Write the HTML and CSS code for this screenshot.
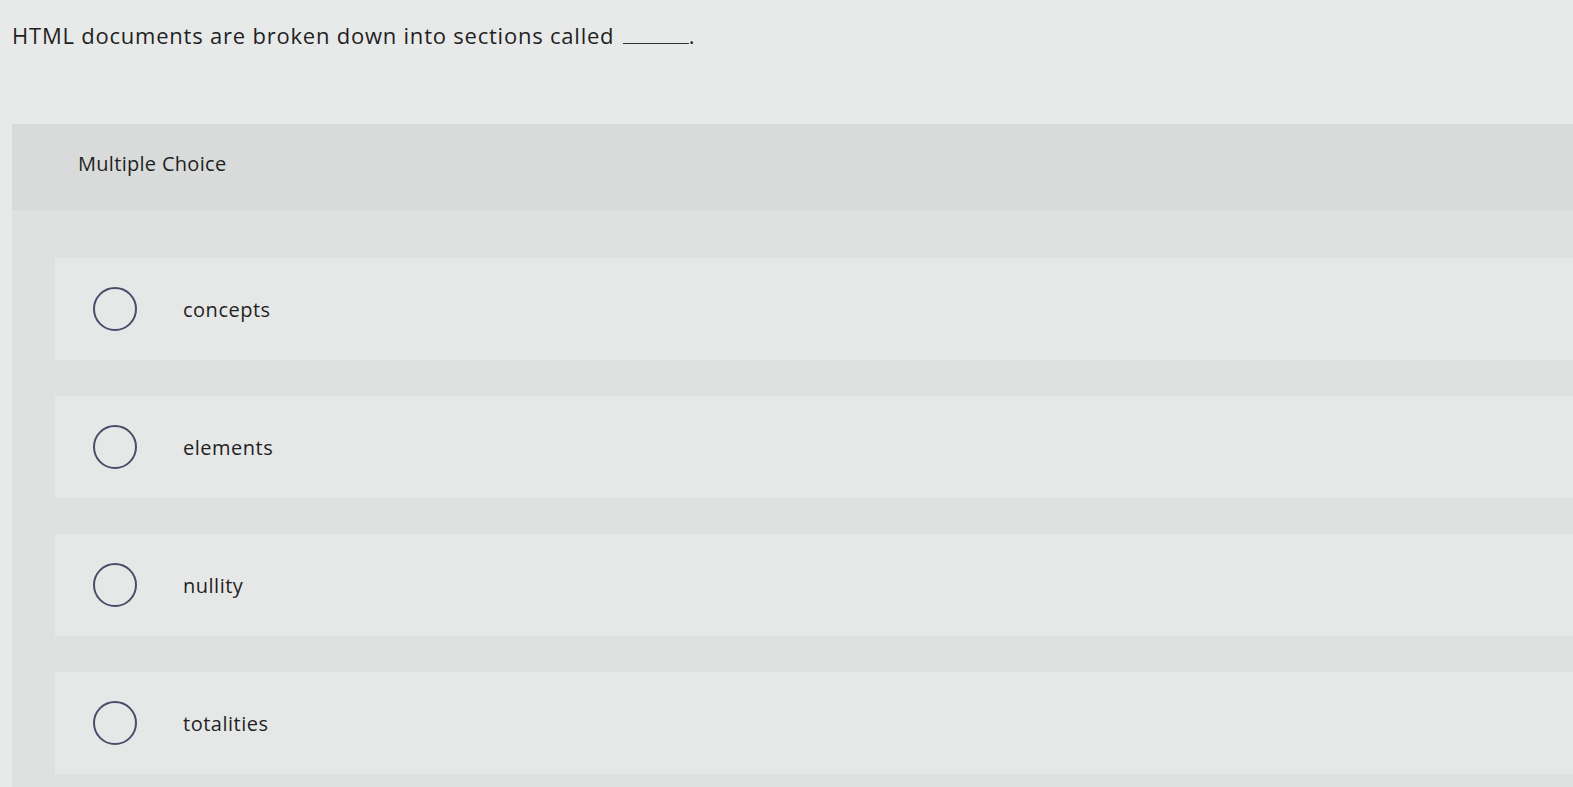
FILE: index.html
```html
<!DOCTYPE html>
<html>
<head>
  <title>Question</title>
  <link rel="stylesheet" href="styles.css">
</head>
<body>

<p class="prompt">HTML documents are broken down into sections called <span class="blank"></span>.</p>

<div class="panel">
  <div class="panel-head">Multiple Choice</div>
  <div class="choices">
    <label class="choice"><span class="radio"></span><span>concepts</span></label>
    <label class="choice"><span class="radio"></span><span>elements</span></label>
    <label class="choice"><span class="radio"></span><span>nullity</span></label>
    <label class="choice"><span class="radio"></span><span>totalities</span></label>
  </div>
</div>

</body>
</html>
```

FILE: styles.css
```css
body {
  margin: 0;
  font-family: "Open Sans", Lato, sans-serif;
  background-color: #e8eae9;
  color: #1f1f24;
}
.prompt {
  margin: 0;
  padding: 20px 12px 0;
  font-size: 22px;
  letter-spacing: 0.78px;
  height: 124px;
  box-sizing: border-box;
}
.blank {
  display: inline-block;
  width: 66px;
  border-bottom: 1px solid #333;
  margin-left: 2px;
}
.panel {
  margin-left: 12px;
  background-color: #dee1e0;
  padding-bottom: 20px;
}
.panel-head {
  background-color: #d8dbda;
  padding: 26px 66px 0;
  height: 86px;
  box-sizing: border-box;
  font-size: 20px;
  letter-spacing: 0.3px;
}
.choices {
  display: flex;
  flex-direction: column;
  gap: 36px;
  padding: 48px 0 0 43px;
}
.choice {
  display: flex;
  align-items: center;
  gap: 46px;
  height: 102px;
  padding-left: 38px;
  background-color: #e6e8e7;
  font-size: 20px;
  letter-spacing: 0.5px;
}
.radio {
  width: 44px;
  height: 44px;
  border: 2px solid #4b4b6a;
  border-radius: 50%;
  box-sizing: border-box;
}
```
